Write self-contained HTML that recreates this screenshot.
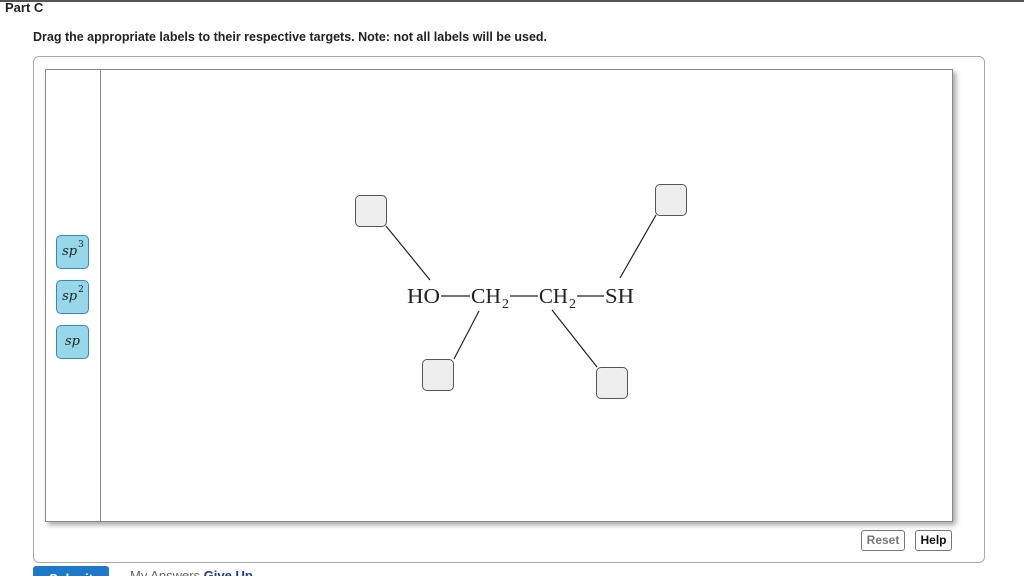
<!DOCTYPE html>
<html><head><style>
html,body{margin:0;width:1024px;height:576px;overflow:hidden;background:#fff;font-family:"Liberation Sans",Arial,sans-serif;position:relative}
.abs{position:absolute}
.tgt{position:absolute;width:30px;height:30px;border:1px solid #555;border-radius:5px;background:#eeeeee}
.lab{position:absolute;left:56px;width:31px;height:32px;border:1px solid #3a86b8;border-radius:5px;background:#96d8ea;font-family:"DejaVu Serif","Liberation Serif",serif;font-style:italic;font-size:13px;text-align:center;line-height:32px;color:#222}
.lab sup{font-size:9px;position:relative;top:4px;left:1px;vertical-align:top;line-height:10px;font-style:normal}
.btn{position:absolute;top:530px;height:19px;border:1px solid #777;border-radius:3px;font-weight:bold;font-size:12px;line-height:19px;text-align:center}
</style></head><body>
<div class="abs" style="left:0;top:0;width:1024px;height:2px;background:#555"></div>
<div class="abs" style="left:5px;top:0;font-weight:bold;font-size:13px;color:#222">Part C</div>
<div class="abs" style="left:33px;top:30px;font-weight:bold;font-size:12.5px;color:#222">Drag the appropriate labels to their respective targets. Note: not all labels will be used.</div>
<div class="abs" style="left:33px;top:56px;width:950px;height:505px;border:1px solid #aaa;border-radius:6px"></div>
<div class="abs" style="left:45px;top:69px;width:906px;height:451px;border:1px solid #888;background:#fff;box-shadow:3px 3px 5px rgba(0,0,0,0.35)"></div>
<div class="abs" style="left:100px;top:70px;width:1px;height:451px;background:#888"></div>
<div class="lab" style="top:235px">sp<sup>3</sup></div>
<div class="lab" style="top:280px">sp<sup>2</sup></div>
<div class="lab" style="top:325px">sp</div>
<svg class="abs" style="left:0;top:0" width="1024" height="576">
<g stroke="#222" stroke-width="1.2">
<line x1="386" y1="226" x2="430" y2="280"/>
<line x1="656" y1="215" x2="620" y2="278"/>
<line x1="479" y1="311" x2="454" y2="359"/>
<line x1="552" y1="310" x2="597" y2="367"/>
<line x1="441" y1="296" x2="470" y2="296"/>
<line x1="510" y1="296" x2="538" y2="296"/>
<line x1="577" y1="296" x2="604" y2="296"/>
</g>
<g font-family="Liberation Serif,serif" font-size="21" fill="#222">
<text x="407" y="303" textLength="33" lengthAdjust="spacingAndGlyphs">HO</text>
<text x="471" y="303" textLength="30" lengthAdjust="spacingAndGlyphs">CH</text>
<text x="502" y="308" font-size="14">2</text>
<text x="539" y="303" textLength="29" lengthAdjust="spacingAndGlyphs">CH</text>
<text x="569" y="308" font-size="14">2</text>
<text x="605" y="303" textLength="29" lengthAdjust="spacingAndGlyphs">SH</text>
</g>
</svg>
<div class="tgt" style="left:355px;top:195px"></div>
<div class="tgt" style="left:655px;top:184px"></div>
<div class="tgt" style="left:422px;top:359px"></div>
<div class="tgt" style="left:596px;top:367px"></div>
<div class="btn" style="left:861px;width:42px;color:#777">Reset</div>
<div class="btn" style="left:915px;width:35px;color:#111">Help</div>
<div class="abs" style="left:33px;top:566px;width:76px;height:20px;background:#1f78c8;border-radius:3px;color:#fff;font-weight:bold;font-size:13px;text-align:center;line-height:26px">Submit</div>
<div class="abs" style="left:130px;top:568px;font-size:13px;color:#666;line-height:16px">My Answers <span style="color:#1a3a8a;font-weight:bold">Give Up</span></div>
</body></html>
